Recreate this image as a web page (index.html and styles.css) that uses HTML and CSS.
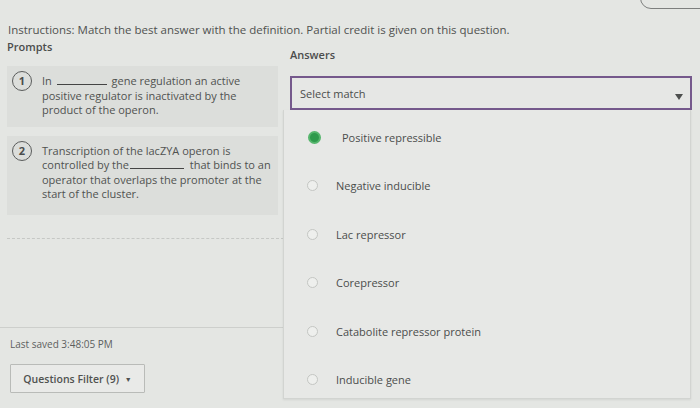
FILE: index.html
```html
<!DOCTYPE html>
<html>
<head>
<meta charset="utf-8">
<link rel="stylesheet" href="styles.css">
</head>
<body>
<div class="page">
  <div class="badge">1 Points</div>
  <p class="instructions">Instructions: Match the best answer with the definition. Partial credit is given on this question.</p>
  <div class="cols">
    <div class="left">
      <h2 class="label">Prompts</h2>
      <div class="prompt">
        <span class="num">1</span>
        <p class="ptext">In <span class="blank"></span> gene regulation an active positive regulator is inactivated by the product of the operon.</p>
      </div>
      <div class="prompt p2">
        <span class="num">2</span>
        <p class="ptext">Transcription of the lacZYA operon is controlled by the<span class="blank b2"></span> that binds to an operator that overlaps the promoter at the start of the cluster.</p>
      </div>
      <div class="dashed"></div>
      <div class="spacer"></div>
      <div class="footer">
        <div class="saved">Last saved 3:48:05 PM</div>
        <button class="filter">Questions Filter (9) <span class="caret">&#9660;</span></button>
      </div>
    </div>
    <div class="right">
      <h2 class="label answers">Answers</h2>
      <div class="selectwrap">
        <div class="select">
          <span>Select match</span>
          <span class="arrow"></span>
        </div>
        <ul class="menu">
          <li class="opt"><span class="radio on"></span><span>Positive repressible</span></li>
          <li class="opt"><span class="radio"></span><span>Negative inducible</span></li>
          <li class="opt"><span class="radio"></span><span>Lac repressor</span></li>
          <li class="opt"><span class="radio"></span><span>Corepressor</span></li>
          <li class="opt"><span class="radio"></span><span>Catabolite repressor protein</span></li>
          <li class="opt"><span class="radio"></span><span>Inducible gene</span></li>
        </ul>
      </div>
    </div>
  </div>
</div>
</body>
</html>
```

FILE: styles.css
```css
* { box-sizing: border-box; }
html, body {
  margin: 0;
  padding: 0;
  width: 700px;
  height: 408px;
  overflow: hidden;
}
body {
  background: #e4e6e3;
  font-family: "Open Sans", "Noto Sans", sans-serif;
  color: #4b4d4c;
}
.page {
  position: relative;
  width: 700px;
  height: 408px;
}
.badge {
  position: absolute;
  right: -20px;
  top: -13px;
  width: 80px;
  height: 22px;
  border: 1px solid #7d7f7e;
  border-radius: 11px;
  font-size: 11px;
  line-height: 14px;
  text-align: center;
  color: #555;
}
.instructions {
  margin: 0;
  padding: 22px 0 0 8px;
  font-size: 11.5px;
  line-height: 15px;
  color: #505250;
}
.cols {
  display: grid;
  grid-template-columns: 284px 1fr;
  height: 371px;
}
.left {
  display: flex;
  flex-direction: column;
  padding-left: 7px;
}
.label {
  margin: 0;
  font-size: 11px;
  font-weight: 600;
  line-height: 14px;
  color: #4b4d4c;
}
.left .label { margin: 3px 0 12px 0; }
.answers { margin: 11px 0 14px 6px; }
.prompt {
  display: flex;
  align-items: flex-start;
  width: 271px;
  background: #dcdedb;
  padding: 5px 0 9px 5px;
  margin-bottom: 9px;
}
.p2 { padding-bottom: 13px; }
.num {
  flex: none;
  width: 20px;
  height: 20px;
  border: 1.5px solid #5a5c5b;
  border-radius: 50%;
  font-size: 11px;
  font-weight: 700;
  line-height: 17px;
  text-align: center;
  color: #4b4d4c;
  margin-right: 10px;
}
.ptext {
  margin: 3px 0 0 0;
  font-size: 11px;
  line-height: 14.5px;
  color: #505250;
}
.blank {
  display: inline-block;
  width: 50px;
  height: 9px;
  border-bottom: 1px solid #444;
  margin: 0 2px;
  vertical-align: baseline;
}
.b2 { width: 54px; margin: 0 3px 0 1px; }
.dashed {
  width: 277px;
  margin-top: 14px;
  border-top: 1px dashed #c6c8c5;
}
.spacer { flex: 1; }
.footer {
  margin-left: -7px;
  border-top: 1px solid #cdcfcc;
  padding: 9px 0 15px 10px;
}
.saved {
  font-size: 10px;
  line-height: 14px;
  color: #5d5f5e;
}
.filter {
  margin-top: 13px;
  width: 135px;
  height: 29px;
  background: #e9eae8;
  border: 1px solid #b9bbb8;
  border-radius: 1px;
  font-family: "Open Sans", "Noto Sans", sans-serif;
  font-size: 10.5px;
  font-weight: 600;
  color: #505250;
  text-align: center;
  padding: 0;
}
.caret { font-size: 7px; margin-left: 3px; vertical-align: 1px; }
.right { padding-right: 8px; }
.selectwrap { position: relative; margin-left: 6px; }
.select {
  display: flex;
  align-items: center;
  justify-content: space-between;
  height: 34px;
  border: 2px solid #75598c;
  background: #e6e7e5;
  padding: 0 7px 0 8px;
  font-size: 11px;
  color: #4b4d4c;
}
.arrow {
  width: 0;
  height: 0;
  border-left: 4px solid transparent;
  border-right: 4px solid transparent;
  border-top: 6px solid #4d4f4e;
  margin-top: 8px;
}
.menu {
  position: absolute;
  left: -7px;
  top: 34px;
  width: 408px;
  height: 289px;
  margin: 0;
  padding: 0;
  list-style: none;
  background: #e7e8e6;
  border: 1px solid #d2d4d1;
  border-top: none;
  box-shadow: 0 1px 2px rgba(0,0,0,0.08);
}
.opt {
  display: flex;
  align-items: center;
  height: 48.5px;
  padding-left: 23px;
  font-size: 11px;
  color: #4b4d4c;
}
.opt:first-child { margin-top: 3px; }
.radio {
  flex: none;
  width: 11px;
  height: 11px;
  border-radius: 50%;
  border: 1px solid #c4c6c3;
  background: #eeefed;
  margin-right: 18px;
}
.radio.on {
  width: 13px;
  height: 13px;
  background: #2e9a4c;
  border: 2px solid #55b56c;
  margin-left: 1px;
  margin-right: 21px;
}
```
